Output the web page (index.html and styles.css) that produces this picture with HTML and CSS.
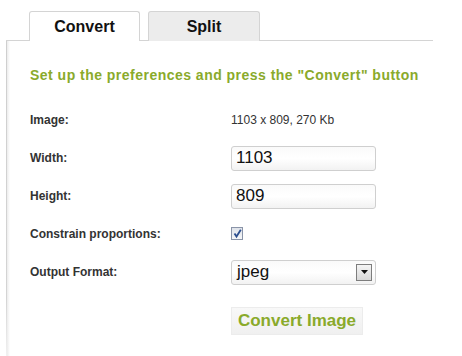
FILE: index.html
```html
<!DOCTYPE html>
<html>
<head>
<meta charset="utf-8">
<link rel="stylesheet" href="styles.css">
</head>
<body>
<div class="wrap">
  <div class="tabs">
    <div class="tab active">Convert</div>
    <div class="tab">Split</div>
  </div>
  <div class="panel">
    <h2 class="lead">Set up the preferences and press the "Convert" button</h2>
    <div class="form">
      <div class="label">Image:</div>
      <div class="value">1103 x 809, 270 Kb</div>
      <div class="label">Width:</div>
      <div><input class="field" type="text" value="1103"></div>
      <div class="label">Height:</div>
      <div><input class="field" type="text" value="809"></div>
      <div class="label">Constrain proportions:</div>
      <div><span class="check"><svg width="11" height="11" viewBox="0 0 11 11"><path d="M2.5 5.5 L4.5 8.5 L8.8 1.8" fill="none" stroke="#2d4f8f" stroke-width="1.8"/></svg></span></div>
      <div class="label">Output Format:</div>
      <div><div class="select"><span class="sel-text">jpeg</span><span class="sel-btn"><svg width="7" height="4" viewBox="0 0 7 4"><path d="M0 0 H7 L3.5 4 Z" fill="#111"/></svg></span></div></div>
    </div>
    <div class="actions">
      <button class="convert">Convert Image</button>
    </div>
  </div>
</div>
</body>
</html>
```

FILE: styles.css
```css
html, body {
  margin: 0;
  padding: 0;
  background: #fff;
}
body {
  font-family: "Liberation Sans", Arial, sans-serif;
  color: #333;
}
.wrap {
  padding: 11px 0 0 6px;
  width: 427px;
}
.tabs {
  display: flex;
  gap: 8px;
  padding-left: 23px;
  margin-bottom: -1px;
  position: relative;
  z-index: 1;
}
.tab {
  box-sizing: border-box;
  width: 112px;
  height: 30px;
  border: 1px solid #d4d4d4;
  border-bottom: none;
  border-radius: 3px 3px 0 0;
  background: #ececec;
  font-weight: bold;
  font-size: 16px;
  color: #111;
  text-align: center;
  line-height: 30px;
}
.tab.active {
  width: 111px;
  background: #fff;
  height: 30px;
}
.panel {
  border-top: 1px solid #d4d4d4;
  background: linear-gradient(to bottom, #cfcfcf 0%, #d4d4d4 80%, #f4f4f4 100%) left top / 1px 100% no-repeat,
              linear-gradient(to right, #ececec, #fff) 1px top / 3px 100% no-repeat;
  padding: 0 0 0 24px;
  min-height: 320px;
}
.lead {
  margin: 0;
  padding-top: 26px;
  font-size: 14px;
  line-height: 16px;
  font-weight: bold;
  color: #8aaa2b;
  letter-spacing: 0.48px;
  white-space: nowrap;
}
.form {
  display: grid;
  grid-template-columns: 201px 146px;
  grid-auto-rows: 38px;
  align-items: center;
  margin-top: 18px;
}
.label {
  font-size: 12px;
  font-weight: bold;
  color: #333;
}
.value {
  font-size: 12px;
  color: #333;
}
.field {
  box-sizing: border-box;
  width: 145px;
  height: 25px;
  border: 1px solid #cfcfcf;
  border-radius: 3px;
  background: linear-gradient(to bottom, #fafafa, #fff 50%, #f2f2f2);
  font-family: "Liberation Sans", Arial, sans-serif;
  font-size: 17px;
  color: #111;
  padding: 0 4px;
  margin: 0;
  display: block;
}
.check {
  box-sizing: border-box;
  display: block;
  width: 12px;
  height: 13px;
  border: 1px solid #8a94a8;
  background: linear-gradient(to bottom, #dfe3ea, #f6f7f9);
  margin-top: -2px;
}
.check svg {
  display: block;
}
.select {
  box-sizing: border-box;
  width: 145px;
  height: 25px;
  border: 1px solid #cfcfcf;
  border-radius: 3px;
  background: linear-gradient(to bottom, #fafafa, #fff 50%, #f2f2f2);
  display: flex;
  align-items: center;
  justify-content: space-between;
  padding: 0 3px 0 5px;
}
.sel-text {
  font-size: 17px;
  color: #111;
}
.sel-btn {
  box-sizing: border-box;
  width: 16px;
  height: 17px;
  border: 1px solid #7d7d7d;
  background: linear-gradient(to bottom, #f4f4f4, #d8d8d8);
  display: flex;
  align-items: center;
  justify-content: center;
}
.sel-btn svg {
  display: block;
}
.actions {
  padding: 16px 0 0 201px;
}
.convert {
  box-sizing: border-box;
  width: 132px;
  height: 28px;
  border: 1px solid #ececec;
  border-radius: 0;
  background: linear-gradient(to bottom, #f8f8f8, #f0f0f0);
  color: #8aaa2b;
  font-family: "Liberation Sans", Arial, sans-serif;
  font-weight: bold;
  font-size: 17px;
  padding: 0;
  margin: 0;
}
```
